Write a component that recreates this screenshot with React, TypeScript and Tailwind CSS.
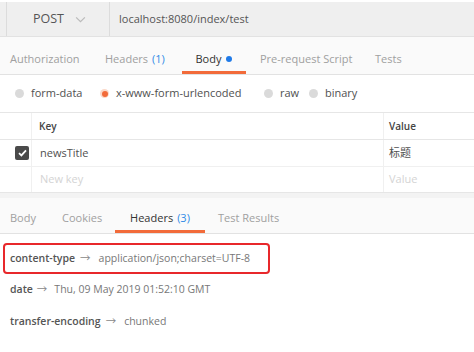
import React from 'react';

const font = { fontFamily: '"Open Sans", "Noto Sans CJK SC", sans-serif' };

const Radio = ({ label, checked, w }: { label: string; checked?: boolean; w: string }) => (
    <div className={`flex items-center gap-[7px] ${w}`}>
        {checked ? (
            <span className="w-[9px] h-[9px] rounded-full bg-[#fbd9c9] flex items-center justify-center">
                <span className="w-[6px] h-[6px] rounded-full bg-[#f26b3a]" />
            </span>
        ) : (
            <span className="w-[9px] h-[9px] rounded-full bg-[#dadada]" />
        )}
        <span className="text-[11px] text-[#505050]">{label}</span>
    </div>
);

export default function App() {
    return (
        <div className="w-[474px] h-[352px] bg-white overflow-hidden whitespace-nowrap" style={font}>
            {/* URL bar */}
            <div className="mt-[2px] h-[35px] bg-[#efefef] flex border-b border-[#e2e2e2]">
                <div className="w-[104px] ml-[6px] flex items-center pl-[26px] gap-[11px] border-r border-l border-[#dcdcdc]">
                    <span className="text-[12.5px] text-[#555]">POST</span>
                    <svg width="11" height="7" viewBox="0 0 12 8" fill="none" stroke="#bbb" strokeWidth="1.4">
                        <path d="M1 1.5 L6 6.5 L11 1.5" />
                    </svg>
                </div>
                <div className="flex items-center pl-[9px] text-[11px] text-[#555]">localhost:8080/index/test</div>
            </div>

            {/* Request tabs */}
            <div className="h-[38px] bg-[#fafafa] border-b border-[#e2e2e2] flex text-[11px] text-[#a0a0a0]">
                <div className="pl-[10px] w-[105px] flex items-center pt-[7px]">Authorization</div>
                <div className="w-[77px] flex items-center pt-[7px]">
                    Headers <span className="text-[#2f8be6] ml-[4px]">(1)</span>
                </div>
                <div className="w-[64px] flex items-center justify-center border-b-[3px] border-[#f26b3a] text-[#333] pt-[10px]">
                    Body <span className="w-[6px] h-[6px] rounded-full bg-[#1f7ae8] ml-[5px]" />
                </div>
                <div className="flex items-center pl-[14px] w-[129px] pt-[7px]">Pre-request Script</div>
                <div className="flex items-center pt-[7px]">Tests</div>
            </div>

            {/* Body type radios */}
            <div className="h-[37px] flex items-center pl-[15px]">
                <Radio label="form-data" w="w-[85px]" />
                <Radio label="x-www-form-urlencoded" checked w="w-[164px]" />
                <Radio label="raw" w="w-[45px]" />
                <Radio label="binary" w="w-[60px]" />
            </div>

            {/* Params table */}
            <div className="border-t border-b border-[#e6e6e6]">
                <div className="flex h-[27px] border-b border-[#e6e6e6]">
                    <div className="w-[32px] border-r border-[#f0f0f0]" />
                    <div className="flex-1 flex items-center pl-[7px] font-semibold text-[#444] text-[10px]">Key</div>
                    <div className="w-[91px] border-l border-[#f0f0f0] flex items-center pl-[5px] font-semibold text-[#444] text-[10px]">Value</div>
                </div>
                <div className="flex h-[27px] border-b border-[#f0f0f0]">
                    <div className="w-[32px] border-r border-[#f0f0f0] flex items-center pl-[15px]">
                        <span className="w-[14px] h-[14px] rounded-[2px] bg-[#4a4a4a] flex items-center justify-center shrink-0">
                            <svg width="9" height="8" viewBox="0 0 9 8" fill="none" stroke="#fff" strokeWidth="1.8">
                                <path d="M1 4.2 L3.4 6.4 L8 1.4" />
                            </svg>
                        </span>
                    </div>
                    <div className="flex-1 flex items-center pl-[8px] text-[11px] text-[#505050]">newsTitle</div>
                    <div className="w-[91px] border-l border-[#f0f0f0] flex items-center pl-[5px] text-[11px] text-[#505050]">标题</div>
                </div>
                <div className="flex h-[25px]">
                    <div className="w-[32px] border-r border-[#f0f0f0]" />
                    <div className="flex-1 flex items-center pl-[8px] text-[11px] text-[#d4d4d4]">New key</div>
                    <div className="w-[91px] border-l border-[#f0f0f0] flex items-center pl-[5px] text-[11px] text-[#d4d4d4]">Value</div>
                </div>
            </div>
            <div className="h-[5px] bg-[#f3f3f3]" />

            {/* Response tabs */}
            <div className="h-[36px] bg-[#fafafa] border-b border-[#e2e2e2] flex text-[11px] text-[#a0a0a0]">
                <div className="pl-[10px] w-[62px] flex items-center pt-[5px]">Body</div>
                <div className="w-[53px] flex items-center pt-[5px]">Cookies</div>
                <div className="w-[90px] flex items-center justify-center border-b-[3px] border-[#f26b3a] text-[#333] pt-[8px]">
                    Headers <span className="text-[#2f8be6] ml-[4px]">(3)</span>
                </div>
                <div className="flex items-center pl-[13px] pt-[5px]">Test Results</div>
            </div>

            {/* Response headers */}
            <div className="pt-[9px] text-[10.5px] text-[#777]">
                <div className="ml-[3px] w-[267px] h-[31px] border-2 border-[#e8282b] rounded-[4px] flex items-center pl-[5px]">
                    <span className="font-semibold text-[#555]">content-type</span>
                    <span className="ml-[5px] text-[#888]">→</span>
                    <span className="ml-[8px]">application/json;charset=UTF-8</span>
                </div>
                <div className="h-[32px] flex items-center pl-[10px]">
                    <span className="font-semibold text-[#555]">date</span>
                    <span className="ml-[4px] text-[#888]">→</span>
                    <span className="ml-[7px]">Thu, 09 May 2019 01:52:10 GMT</span>
                </div>
                <div className="h-[32px] flex items-center pl-[10px]">
                    <span className="font-semibold text-[#555]">transfer-encoding</span>
                    <span className="ml-[5px] text-[#888]">→</span>
                    <span className="ml-[8px]">chunked</span>
                </div>
            </div>
        </div>
    );
}
